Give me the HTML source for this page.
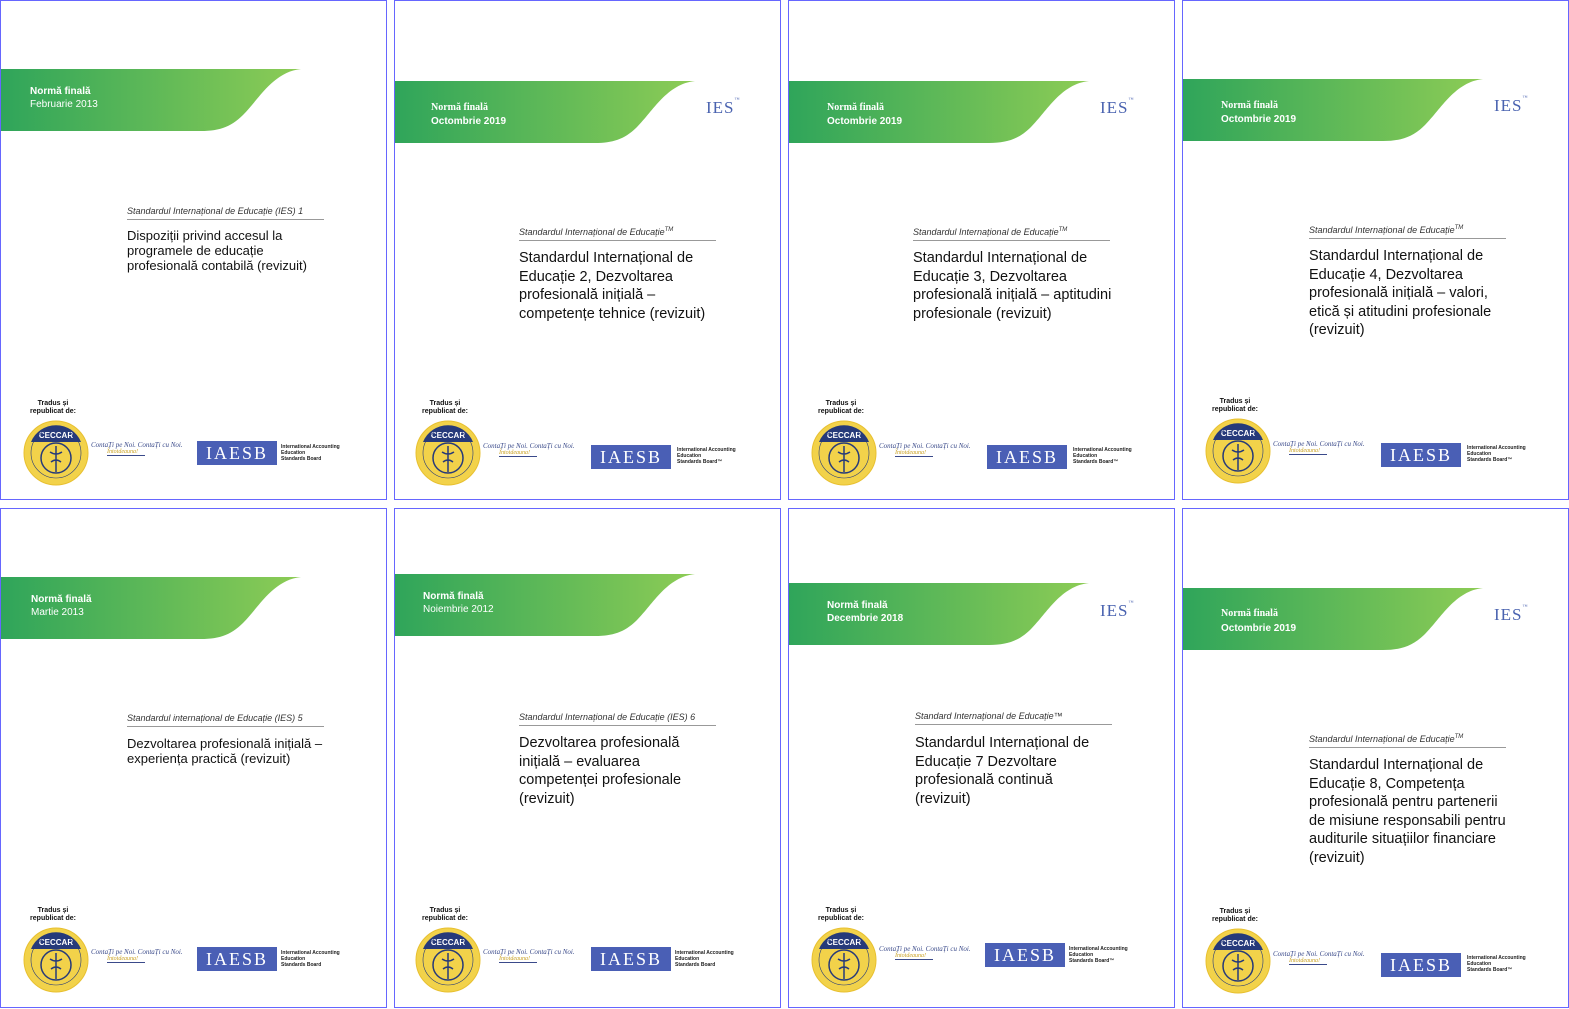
<!DOCTYPE html>
<html><head><meta charset="utf-8"><style>
*{margin:0;padding:0;box-sizing:border-box}
body{width:1569px;height:1009px;background:#fff;position:relative;overflow:hidden;font-family:"Liberation Sans",sans-serif;color:#111}
.p{position:absolute;width:387px;height:500px;border:1px solid #6666ff;background:#fff}
.a{position:absolute}
.b{position:absolute;left:0;width:300px;height:62px}
.bt{position:absolute;color:#fff;font-size:10px;line-height:13px}
.bt b{font-weight:bold}
.ies{position:absolute;font-family:"Liberation Serif",serif;color:#4a63b0;font-size:17px;letter-spacing:1px}
.ies sup{font-size:5px;vertical-align:top}
.lab{position:absolute;font-style:italic;font-size:9px;color:#333;border-bottom:1px solid #999;width:197px;padding-bottom:3px}
.lab sup{font-size:6px}
.ti{position:absolute;font-size:14.5px;line-height:18.5px;color:#111;width:200px}
.tr{position:absolute;font-size:7px;font-weight:bold;text-align:center;line-height:8px;width:60px}
.sl{position:absolute;font-size:7px;font-style:italic;color:#3a4a8a;font-family:"Liberation Serif",serif}
.sl i{display:block;color:#c9a020;margin-left:16px;border-bottom:1.5px solid #3a4a8a;width:38px;font-size:6px}
.ia{position:absolute;width:80px;height:24px;background:#4a5fb5;color:#fff;font-family:"Liberation Serif",serif;font-size:18px;text-align:center;line-height:24px;letter-spacing:2px}
.it{position:absolute;font-size:5px;line-height:6px;color:#222;font-weight:bold}
</style></head><body>
<svg width="0" height="0" style="position:absolute"><defs>
<linearGradient id="g" x1="0" x2="1"><stop offset="0" stop-color="#2fa55a"/><stop offset="1" stop-color="#8dcc55"/></linearGradient>
<symbol id="ban" viewBox="0 0 300 62"><path d="M0 0H300C272 3 258 30 242 46C230 58 218 62 200 62H0Z" fill="url(#g)"/></symbol>
<symbol id="seal" viewBox="0 0 66 66"><circle cx="33" cy="33" r="32" fill="#f2d24a" stroke="#e8c030"/><path d="M8 22A27 27 0 0 1 58 22Z" fill="#263a7a"/><text x="33" y="18" font-size="8" font-weight="bold" fill="#fff" text-anchor="middle" font-family="Liberation Sans">CECCAR</text><circle cx="33" cy="38" r="15" fill="none" stroke="#263a7a" stroke-width="1.5"/><path d="M33 26V52M27 32Q33 36 39 32M28 42Q33 38 38 42" stroke="#263a7a" stroke-width="1.5" fill="none"/><circle cx="33" cy="33" r="25" fill="none" stroke="#263a7a" stroke-width=".6"/></symbol>
</defs></svg>

<div class="p" style="left:0;top:0">
<svg class="b" style="top:68px"><use href="#ban"/></svg>
<div class="bt" style="left:29px;top:84px"><b>Normă finală</b><br>Februarie 2013</div>
<div class="lab" style="left:126px;top:205px">Standardul Internațional de Educație (IES) 1</div>
<div class="ti" style="left:126px;top:227px;font-size:13px;line-height:15px">Dispoziții privind accesul la programele de educație profesională contabilă (revizuit)</div>
<div class="tr" style="left:22px;top:399px">Tradus și<br>republicat de:</div>
<svg class="a" style="left:22px;top:419px" width="66" height="66"><use href="#seal"/></svg>
<div class="sl" style="left:90px;top:440px">ContaȚi pe Noi. ContaȚi cu Noi.<i>Întotdeauna!</i></div>
<div class="ia" style="left:196px;top:440px">IAESB</div>
<div class="it" style="left:280px;top:443px">International Accounting<br>Education<br>Standards Board</div>
</div>

<div class="p" style="left:394px;top:0">
<svg class="b" style="top:80px"><use href="#ban"/></svg>
<div class="bt" style="left:36px;top:100px;font-family:'Liberation Serif',serif"><b>Normă finală</b></div>
<div class="bt" style="left:36px;top:114px"><b>Octombrie 2019</b></div>
<div class="ies" style="left:311px;top:97px">IES<sup>™</sup></div>
<div class="lab" style="left:124px;top:226px">Standardul Internațional de Educație<sup>TM</sup></div>
<div class="ti" style="left:124px;top:248px">Standardul Internațional de Educație 2, Dezvoltarea profesională inițială – competențe tehnice (revizuit)</div>
<div class="tr" style="left:20px;top:399px">Tradus și<br>republicat de:</div>
<svg class="a" style="left:20px;top:419px" width="66" height="66"><use href="#seal"/></svg>
<div class="sl" style="left:88px;top:441px">ContaȚi pe Noi. ContaȚi cu Noi.<i>Întotdeauna!</i></div>
<div class="ia" style="left:196px;top:444px">IAESB</div>
<div class="it" style="left:282px;top:446px">International Accounting<br>Education<br>Standards Board™</div>
</div>

<div class="p" style="left:788px;top:0">
<svg class="b" style="top:80px"><use href="#ban"/></svg>
<div class="bt" style="left:38px;top:100px;font-family:'Liberation Serif',serif"><b>Normă finală</b></div>
<div class="bt" style="left:38px;top:114px"><b>Octombrie 2019</b></div>
<div class="ies" style="left:311px;top:97px">IES<sup>™</sup></div>
<div class="lab" style="left:124px;top:226px">Standardul Internațional de Educație<sup>TM</sup></div>
<div class="ti" style="left:124px;top:248px">Standardul Internațional de Educație 3, Dezvoltarea profesională inițială – aptitudini profesionale (revizuit)</div>
<div class="tr" style="left:22px;top:399px">Tradus și<br>republicat de:</div>
<svg class="a" style="left:22px;top:419px" width="66" height="66"><use href="#seal"/></svg>
<div class="sl" style="left:90px;top:441px">ContaȚi pe Noi. ContaȚi cu Noi.<i>Întotdeauna!</i></div>
<div class="ia" style="left:198px;top:444px">IAESB</div>
<div class="it" style="left:284px;top:446px">International Accounting<br>Education<br>Standards Board™</div>
</div>

<div class="p" style="left:1182px;top:0">
<svg class="b" style="top:78px"><use href="#ban"/></svg>
<div class="bt" style="left:38px;top:98px;font-family:'Liberation Serif',serif"><b>Normă finală</b></div>
<div class="bt" style="left:38px;top:112px"><b>Octombrie 2019</b></div>
<div class="ies" style="left:311px;top:95px">IES<sup>™</sup></div>
<div class="lab" style="left:126px;top:224px">Standardul Internațional de Educație<sup>TM</sup></div>
<div class="ti" style="left:126px;top:246px">Standardul Internațional de Educație 4, Dezvoltarea profesională inițială – valori, etică și atitudini profesionale (revizuit)</div>
<div class="tr" style="left:22px;top:397px">Tradus și<br>republicat de:</div>
<svg class="a" style="left:22px;top:417px" width="66" height="66"><use href="#seal"/></svg>
<div class="sl" style="left:90px;top:439px">ContaȚi pe Noi. ContaȚi cu Noi.<i>Întotdeauna!</i></div>
<div class="ia" style="left:198px;top:442px">IAESB</div>
<div class="it" style="left:284px;top:444px">International Accounting<br>Education<br>Standards Board™</div>
</div>

<div class="p" style="left:0;top:508px">
<svg class="b" style="top:68px"><use href="#ban"/></svg>
<div class="bt" style="left:30px;top:84px"><b>Normă finală</b><br>Martie 2013</div>
<div class="lab" style="left:126px;top:204px">Standardul internațional de Educație (IES) 5</div>
<div class="ti" style="left:126px;top:227px;font-size:13px;line-height:15px;width:210px">Dezvoltarea profesională inițială – experiența practică (revizuit)</div>
<div class="tr" style="left:22px;top:398px">Tradus și<br>republicat de:</div>
<svg class="a" style="left:22px;top:418px" width="66" height="66"><use href="#seal"/></svg>
<div class="sl" style="left:90px;top:439px">ContaȚi pe Noi. ContaȚi cu Noi.<i>Întotdeauna!</i></div>
<div class="ia" style="left:196px;top:438px">IAESB</div>
<div class="it" style="left:280px;top:441px">International Accounting<br>Education<br>Standards Board</div>
</div>

<div class="p" style="left:394px;top:508px">
<svg class="b" style="top:65px"><use href="#ban"/></svg>
<div class="bt" style="left:28px;top:81px"><b>Normă finală</b><br>Noiembrie 2012</div>
<div class="lab" style="left:124px;top:203px">Standardul Internațional de Educație (IES) 6</div>
<div class="ti" style="left:124px;top:225px">Dezvoltarea profesională inițială – evaluarea competenței profesionale (revizuit)</div>
<div class="tr" style="left:20px;top:398px">Tradus și<br>republicat de:</div>
<svg class="a" style="left:20px;top:418px" width="66" height="66"><use href="#seal"/></svg>
<div class="sl" style="left:88px;top:439px">ContaȚi pe Noi. ContaȚi cu Noi.<i>Întotdeauna!</i></div>
<div class="ia" style="left:196px;top:438px">IAESB</div>
<div class="it" style="left:280px;top:441px">International Accounting<br>Education<br>Standards Board</div>
</div>

<div class="p" style="left:788px;top:508px">
<svg class="b" style="top:74px"><use href="#ban"/></svg>
<div class="bt" style="left:38px;top:90px"><b>Normă finală</b><br><b>Decembrie 2018</b></div>
<div class="ies" style="left:311px;top:92px">IES<sup>™</sup></div>
<div class="lab" style="left:126px;top:202px">Standard Internațional de Educație™</div>
<div class="ti" style="left:126px;top:225px;width:190px">Standardul Internațional de Educație 7 Dezvoltare profesională continuă (revizuit)</div>
<div class="tr" style="left:22px;top:398px">Tradus și<br>republicat de:</div>
<svg class="a" style="left:22px;top:418px" width="66" height="66"><use href="#seal"/></svg>
<div class="sl" style="left:90px;top:436px">ContaȚi pe Noi. ContaȚi cu Noi.<i>Întotdeauna!</i></div>
<div class="ia" style="left:196px;top:434px">IAESB</div>
<div class="it" style="left:280px;top:437px">International Accounting<br>Education<br>Standards Board™</div>
</div>

<div class="p" style="left:1182px;top:508px">
<svg class="b" style="top:79px"><use href="#ban"/></svg>
<div class="bt" style="left:38px;top:98px;font-family:'Liberation Serif',serif"><b>Normă finală</b></div>
<div class="bt" style="left:38px;top:113px"><b>Octombrie 2019</b></div>
<div class="ies" style="left:311px;top:96px">IES<sup>™</sup></div>
<div class="lab" style="left:126px;top:225px">Standardul Internațional de Educație<sup>TM</sup></div>
<div class="ti" style="left:126px;top:247px">Standardul Internațional de Educație 8, Competența profesională pentru partenerii de misiune responsabili pentru auditurile situațiilor financiare (revizuit)</div>
<div class="tr" style="left:22px;top:399px">Tradus și<br>republicat de:</div>
<svg class="a" style="left:22px;top:419px" width="66" height="66"><use href="#seal"/></svg>
<div class="sl" style="left:90px;top:441px">ContaȚi pe Noi. ContaȚi cu Noi.<i>Întotdeauna!</i></div>
<div class="ia" style="left:198px;top:444px">IAESB</div>
<div class="it" style="left:284px;top:446px">International Accounting<br>Education<br>Standards Board™</div>
</div>
</body></html>
